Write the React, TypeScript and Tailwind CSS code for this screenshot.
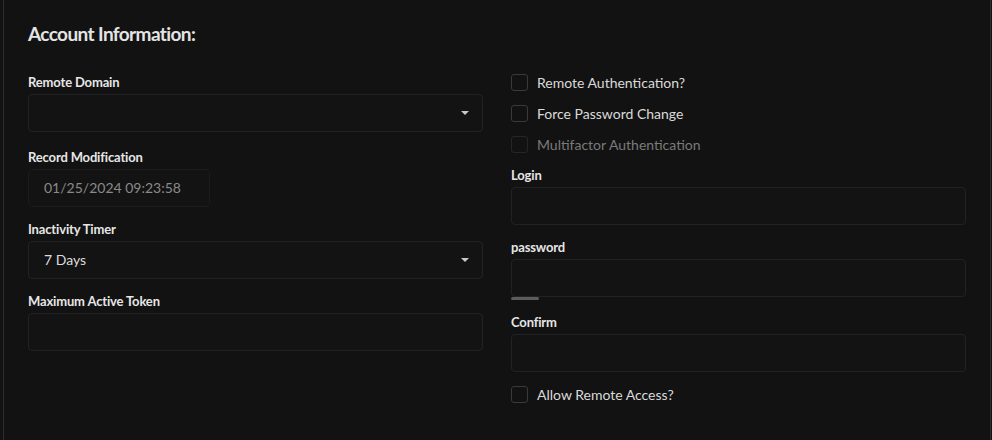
import React from "react";

const font = { fontFamily: "Lato, 'Noto Sans', sans-serif" };

type FieldProps = {
  label: string;
  children: React.ReactNode;
  className?: string;
};

const Field = ({ label, children, className }: FieldProps) => (
  <div className={className}>
    <div className="text-[13px] leading-4 font-bold tracking-[-0.15px] text-[#e6e6e6] mb-1">{label}</div>
    {children}
  </div>
);

const Caret = () => (
  <svg width="8" height="4" viewBox="0 0 8 4" className="text-[#c8c8c8]">
    <path d="M0 0h8L4 4z" fill="currentColor" />
  </svg>
);

type BoxProps = {
  children?: React.ReactNode;
  className?: string;
  muted?: boolean;
};

const Box = ({ children, className = "", muted }: BoxProps) => (
  <div
    className={`h-[38px] rounded border bg-[#131313] flex items-center px-[15px] text-sm ${
      muted ? "text-[#8a8a8a] border-[#1c1c1c]" : "text-[#dcdcdc] border-[#222222]"
    } ${className}`}
  >
    {children}
  </div>
);

const Select = ({ value }: { value?: string }) => (
  <Box className="justify-between pr-[13px]">
    <span>{value}</span>
    <Caret />
  </Box>
);

const Check = ({ label, disabled }: { label: string; disabled?: boolean }) => (
  <label className="flex items-center gap-[9px] h-[17px]">
    <span
      className={`w-[17px] h-[17px] rounded-[3px] border ${
        disabled ? "border-[#262626]" : "border-[#3a3a3a]"
      }`}
    />
    <span className={`text-sm ${disabled ? "text-[#7a7a7a]" : "text-[#dadada]"}`}>{label}</span>
  </label>
);

export default function App() {
  return (
    <div className="bg-[#121212] w-[992px] h-[440px] overflow-hidden" style={font}>
      <div className="ml-[3px] w-[988px] h-full border-x border-[#2c2c2c] px-6 pt-[22px]">
        <h2 className="text-[19px] font-bold tracking-[-0.6px] text-[#e4e4e4] leading-6">Account Information:</h2>

        <div className="grid grid-cols-[455px_455px] gap-x-7 mt-[28px]">
          <div className="flex flex-col">
            <Field label="Remote Domain">
              <Select />
            </Field>
            <Field label="Record Modification" className="mt-[17px]">
              <Box muted className="w-[182px]">01/25/2024 09:23:58</Box>
            </Field>
            <Field label="Inactivity Timer" className="mt-[14px]">
              <Select value="7 Days" />
            </Field>
            <Field label="Maximum Active Token" className="mt-[14px]">
              <Box />
            </Field>
          </div>

          <div className="flex flex-col">
            <div className="flex flex-col gap-[14px]">
              <Check label="Remote Authentication?" />
              <Check label="Force Password Change" />
              <Check label="Multifactor Authentication" disabled />
            </div>
            <Field label="Login" className="mt-[14px]">
              <Box />
            </Field>
            <Field label="password" className="mt-[14px]">
              <Box />
              <div className="h-[3px] w-7 rounded-sm bg-[#5c5c5c]" />
            </Field>
            <Field label="Confirm" className="mt-[14px]">
              <Box />
            </Field>
            <div className="mt-[14px]">
              <Check label="Allow Remote Access?" />
            </div>
          </div>
        </div>
      </div>
    </div>
  );
}
